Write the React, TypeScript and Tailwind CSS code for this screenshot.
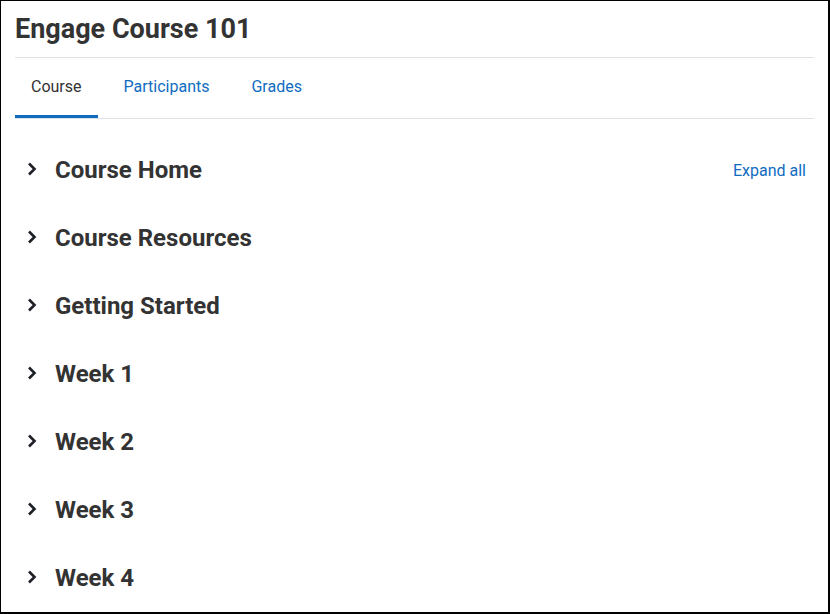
import { useState } from "react";

const sections = [
  "Course Home",
  "Course Resources",
  "Getting Started",
  "Week 1",
  "Week 2",
  "Week 3",
  "Week 4",
];

const tabs = ["Course", "Participants", "Grades"];

function Chevron() {
  return (
    <svg width="10" height="14" viewBox="0 0 10 14" className="shrink-0">
      <path d="M2 1.5 L7.5 7 L2 12.5" fill="none" stroke="#1d2125" strokeWidth="2.6" />
    </svg>
  );
}

export default function App() {
  const [active, setActive] = useState("Course");

  return (
    <div className="h-[614px] w-[830px] overflow-hidden border-t border-l border-r-2 border-b-2 border-black bg-white font-['Roboto',sans-serif] text-[#333]">
      <div className="px-[14px]">
        <div className="flex h-[57px] items-center border-b border-[#dee2e6]">
          <h1 className="text-[27px] leading-none font-bold">Engage Course 101</h1>
        </div>
        <nav className="flex gap-[10px] border-b border-[#dee2e6]">
          {tabs.map((t) => (
            <button
              key={t}
              onClick={() => setActive(t)}
              className={`h-[60px] border-b-[3px] px-4 pt-[1px] text-[16px] ${
                active === t ? "border-[#0f6cbf] text-[#333]" : "border-transparent text-[#0f6cbf]"
              }`}
            >
              {t}
            </button>
          ))}
        </nav>
        <div className="pt-4 pr-2">
          {sections.map((s, i) => (
            <div key={s} className="flex h-[68px] items-center">
              <div className="ml-3 flex items-center gap-[18px]">
                <Chevron />
                <h3 className="mt-[2px] text-[24px] leading-none font-bold">{s}</h3>
              </div>
              {i === 0 && <span className="mt-[3px] ml-auto text-[16px] text-[#0f6cbf]">Expand all</span>}
            </div>
          ))}
        </div>
      </div>
    </div>
  );
}
